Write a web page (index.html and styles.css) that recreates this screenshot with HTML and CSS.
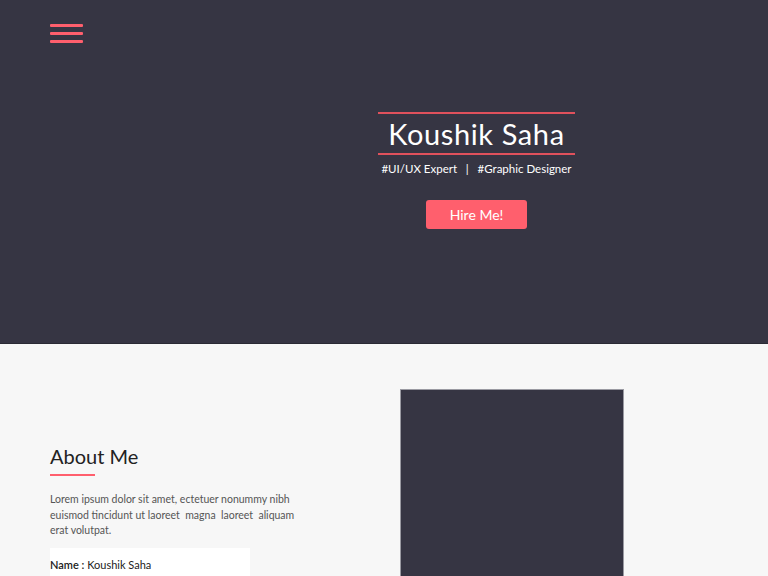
FILE: index.html
```html
<!DOCTYPE html>
<html lang="en">
<head>
    <meta charset="UTF-8">
    <meta name="viewport" content="width=device-width, initial-scale=1.0">
    <title>Koushik Saha</title>
    <link rel="stylesheet" href="styles.css">
</head>
<body>
    <header class="hero">
        <button class="menu-btn" aria-label="Menu">
            <span></span>
            <span></span>
            <span></span>
        </button>

        <div class="hero-content">
            <h1 class="hero-name">Koushik Saha</h1>
            <p class="hero-tags">#UI/UX Expert &nbsp; | &nbsp; #Graphic Designer</p>
            <a class="hire-btn" href="#">Hire Me!</a>
        </div>
    </header>

    <section class="about">
        <div class="about-text">
            <h2 class="section-title">About Me</h2>
            <p class="about-desc">Lorem ipsum dolor sit amet, ectetuer nonummy nibh euismod tincidunt ut laoreet&nbsp; magna&nbsp; laoreet&nbsp; aliquam erat volutpat.</p>
            <ul class="info-list">
                <li><strong>Name :</strong> Koushik Saha</li>
            </ul>
        </div>
        <div class="about-photo"></div>
    </section>
</body>
</html>
```

FILE: styles.css
```css
* {
    margin: 0;
    padding: 0;
    box-sizing: border-box;
}

body {
    font-family: Lato, 'Open Sans', sans-serif;
    background: #f7f7f7;
    color: #333;
    height: 576px;
    overflow: hidden;
}

.hero {
    background: #363543;
    height: 344px;
    border-bottom: 1px solid #2a2a34;
    padding: 24px 50px 0;
}

.menu-btn {
    display: flex;
    flex-direction: column;
    gap: 5px;
    width: 33px;
    background: none;
    border: none;
    cursor: pointer;
}

.menu-btn span {
    display: block;
    height: 3px;
    background: #ff5f6d;
    border-radius: 1px;
}

.hero-content {
    display: flex;
    flex-direction: column;
    align-items: center;
    padding-left: 185px;
    margin-top: 69px;
    color: #fff;
}

.hero-name {
    font-size: 29px;
    font-weight: 400;
    letter-spacing: 0.6px;
    padding: 3px 10px 3px;
    border-top: 2px solid #e0515c;
    border-bottom: 2px solid #e0515c;
    line-height: 1.15;
}

.hero-tags {
    font-size: 11.5px;
    margin-top: 7px;
}

.hire-btn {
    margin-top: 25px;
    display: block;
    width: 101px;
    height: 29px;
    line-height: 29px;
    text-align: center;
    background: #ff5f6d;
    color: #fff;
    border-radius: 3px;
    font-size: 14px;
    text-decoration: none;
}

.about {
    display: flex;
    padding: 45px 0 0 50px;
}

.about-text {
    width: 250px;
    padding-top: 55px;
}

.section-title {
    font-size: 20px;
    font-weight: 400;
    color: #222;
    padding-bottom: 8px;
}

.section-title::after {
    content: '';
    display: block;
    width: 45px;
    height: 2px;
    background: #ff5f6d;
    margin-top: 6px;
}

.about-desc {
    font-size: 10.5px;
    line-height: 15.5px;
    color: #555;
    margin-top: 8px;
}

.info-list {
    list-style: none;
    margin-top: 9px;
    width: 200px;
    background: #fff;
}

.info-list li {
    font-size: 11px;
    padding: 10px 0 8px;
    color: #222;
}

.info-list strong {
    font-weight: 600;
}

.about-photo {
    margin-left: 100px;
    width: 224px;
    height: 300px;
    background: #363543;
    border: 1px solid #9a9aa2;
}
```
